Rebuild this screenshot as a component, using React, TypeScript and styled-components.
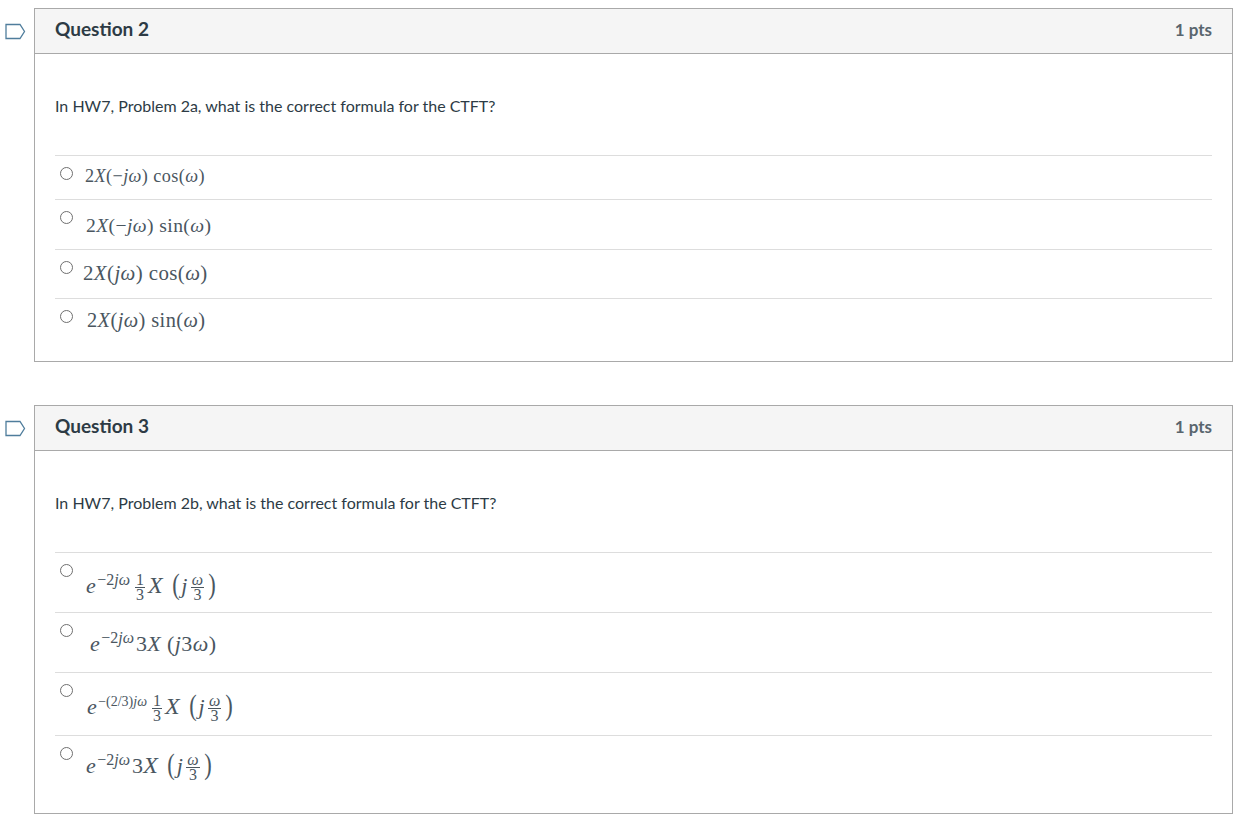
import styled, { createGlobalStyle } from 'styled-components';
import type { ReactNode } from 'react';

const GlobalStyle = createGlobalStyle`
  html, body {
    margin: 0;
    padding: 0;
    background: #fff;
  }
`;

const Page = styled.div`
  width: 1246px;
  height: 835px;
  box-sizing: border-box;
  padding: 8px 13px 0 34px;
  font-family: Lato, "Open Sans", sans-serif;
  color: #2d3b45;
  overflow: hidden;
`;

const Card = styled.section<{ $gap?: number }>`
  position: relative;
  border: 1px solid #a9a9a9;
  margin-bottom: ${(p) => p.$gap ?? 0}px;
`;

const Flag = styled.svg`
  position: absolute;
  left: -30px;
  top: 14px;
  width: 21px;
  height: 17px;
`;

const Header = styled.header`
  display: flex;
  align-items: center;
  justify-content: space-between;
  height: 45px;
  box-sizing: border-box;
  padding: 0 20px 5px;
  background: #f5f5f5;
  border-bottom: 1px solid #a9a9a9;
`;

const Title = styled.h2`
  margin: 0;
  font-size: 19px;
  font-weight: 700;
  color: #2d3b45;
`;

const Points = styled.span`
  padding-top: 2px;
  font-size: 17px;
  font-weight: 700;
  color: #59656e;
`;

const Body = styled.div<{ $height: number }>`
  height: ${(p) => p.$height}px;
  box-sizing: border-box;
  padding: 42px 20px 0;
`;

const Prompt = styled.p`
  margin: 0 0 39px;
  font-size: 16px;
  line-height: 20px;
`;

const Row = styled.div<{ $height: number }>`
  display: flex;
  align-items: flex-start;
  height: ${(p) => p.$height}px;
  box-sizing: border-box;
  border-top: 1px solid #ddd;
`;

const Radio = styled.span`
  flex: none;
  width: 13px;
  height: 13px;
  box-sizing: border-box;
  margin: 11px 0 0 5px;
  border: 1.5px solid #6f6f6f;
  border-radius: 50%;
  background: #fff;
`;

const Formula = styled.div<{ $indent: number; $top: number; $size?: number }>`
  margin: ${(p) => p.$top}px 0 0 ${(p) => p.$indent}px;
  font-family: "Liberation Serif", "Times New Roman", serif;
  font-size: ${(p) => p.$size ?? 22}px;
  line-height: 24px;
  letter-spacing: 0.4px;
  color: #4a565f;
  white-space: pre;
`;

const Var = styled.i`
  font-style: italic;
`;

const BigX = styled.i`
  font-style: italic;
  font-size: 24px;
  line-height: 1;
  margin-right: 2px;
`;

const Sup = styled.span<{ $size?: number }>`
  position: relative;
  top: -8px;
  font-size: ${(p) => p.$size ?? 16}px;
  line-height: 1;
  letter-spacing: 0;
  margin: 0 2px 0 1px;
`;

const Frac = styled.span`
  display: inline-flex;
  flex-direction: column;
  align-items: center;
  vertical-align: middle;
  margin: 0 3px;
  font-size: 16px;
  line-height: 14px;
  letter-spacing: 0;
`;

const Over = styled.span`
  border-bottom: 1px solid #4a565f;
  padding: 0 1px;
`;

const Big = styled.span`
  display: inline-block;
  font-size: 30px;
  line-height: 24px;
  font-weight: 400;
  transform: scaleX(0.75) translateY(1px);
`;

function Ex({ children, size }: { children: ReactNode; size?: number }) {
  return (
    <>
      <Var>e</Var>
      <Sup $size={size}>{children}</Sup>
    </>
  );
}

function Fraction({ top }: { top: ReactNode }) {
  return (
    <Frac>
      <Over>{top}</Over>
      <span>3</span>
    </Frac>
  );
}

function FlagIcon() {
  return (
    <Flag viewBox="0 0 21 17" aria-hidden>
      <path d="M1 1.5H15L19.5 8.5L15 15.5H1Z" fill="#fff" stroke="#4f7d9c" strokeWidth="1.3" />
    </Flag>
  );
}

const w = <Var>ω</Var>;
const jw = <Var>jω</Var>;

const jOver3 = (
  <>
    <Big>(</Big>
    <Var>j</Var>
    <Fraction top={w} />
    <Big>)</Big>
  </>
);

export default function App() {
  return (
    <Page>
      <GlobalStyle />
      <Card $gap={43}>
        <FlagIcon />
        <Header>
          <Title>Question 2</Title>
          <Points>1 pts</Points>
        </Header>
        <Body $height={307}>
          <Prompt>In HW7, Problem 2a, what is the correct formula for the CTFT?</Prompt>
          <Row $height={44}>
            <Radio />
            <Formula $indent={12} $top={8} $size={18.2}>
              2<Var>X</Var>(−{jw}) cos({w})
            </Formula>
          </Row>
          <Row $height={50}>
            <Radio />
            <Formula $indent={13} $top={14} $size={19.6}>
              2<Var>X</Var>(−{jw}) sin({w})
            </Formula>
          </Row>
          <Row $height={49}>
            <Radio />
            <Formula $indent={10} $top={11} $size={20.9}>
              2<Var>X</Var>({jw}) cos({w})
            </Formula>
          </Row>
          <Row $height={44}>
            <Radio />
            <Formula $indent={14} $top={9} $size={20.4}>
              2<Var>X</Var>({jw}) sin({w})
            </Formula>
          </Row>
        </Body>
      </Card>
      <Card>
        <FlagIcon />
        <Header>
          <Title>Question 3</Title>
          <Points>1 pts</Points>
        </Header>
        <Body $height={362}>
          <Prompt>In HW7, Problem 2b, what is the correct formula for the CTFT?</Prompt>
          <Row $height={60}>
            <Radio />
            <Formula $indent={13} $top={18}>
              <Ex>
                −2<Var>jω</Var>
              </Ex>
              <Fraction top="1" />
              <BigX>X</BigX> {jOver3}
            </Formula>
          </Row>
          <Row $height={60}>
            <Radio />
            <Formula $indent={17} $top={19}>
              <Ex>
                −2<Var>jω</Var>
              </Ex>
              3<Var>X</Var> (<Var>j</Var>3{w})
            </Formula>
          </Row>
          <Row $height={63}>
            <Radio />
            <Formula $indent={14} $top={19}>
              <Ex size={14}>
                −(2/3)<Var>jω</Var>
              </Ex>
              <Fraction top="1" />
              <BigX>X</BigX> {jOver3}
            </Formula>
          </Row>
          <Row $height={50}>
            <Radio />
            <Formula $indent={13} $top={15}>
              <Ex>
                −2<Var>jω</Var>
              </Ex>
              3<BigX>X</BigX> {jOver3}
            </Formula>
          </Row>
        </Body>
      </Card>
    </Page>
  );
}
